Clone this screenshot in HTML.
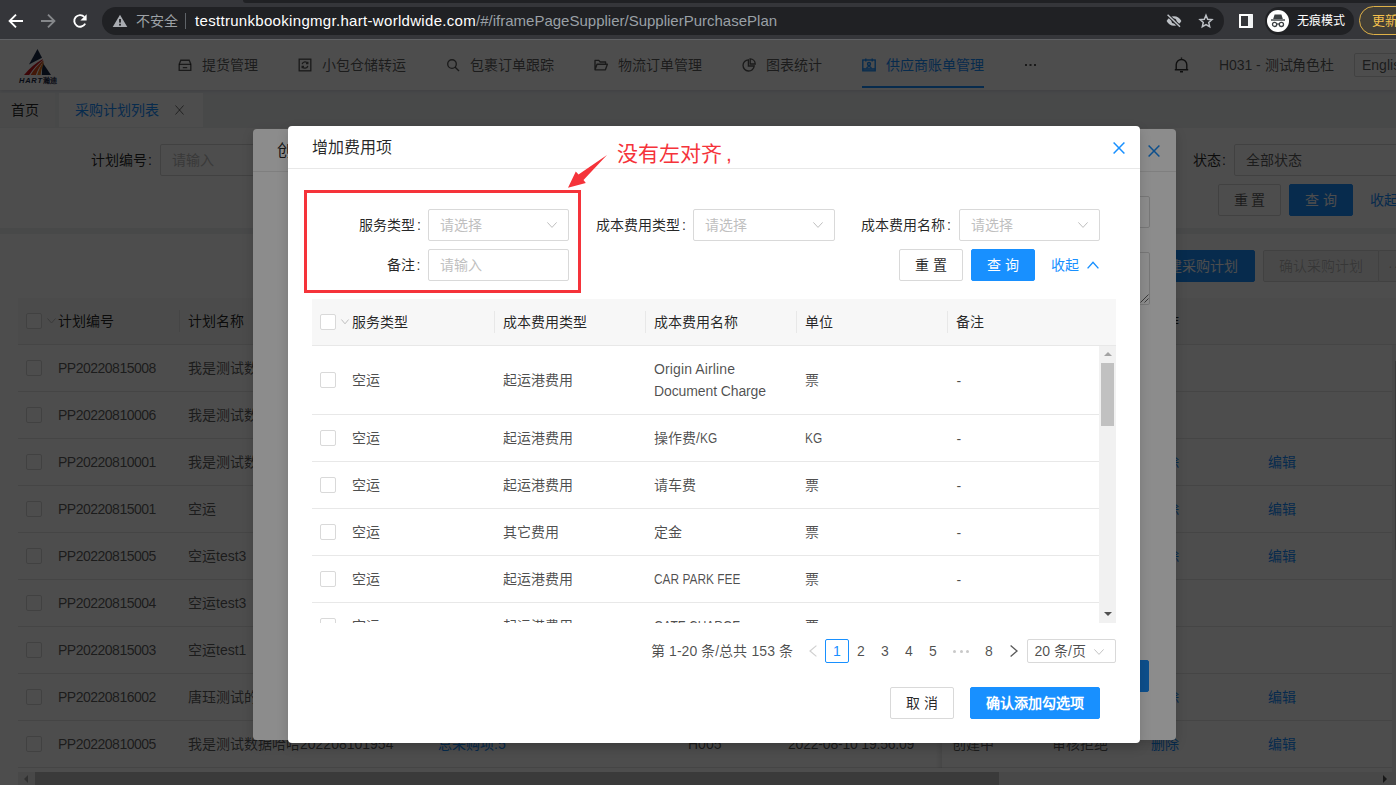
<!DOCTYPE html>
<html lang="zh-CN">
<head>
<meta charset="utf-8">
<title>SupplierPurchasePlan</title>
<style>
*{box-sizing:border-box;margin:0;padding:0}
html,body{width:1396px;height:785px;overflow:hidden;background:#f0f2f5}
body{position:relative;font-family:"Liberation Sans",sans-serif;font-size:14px;color:rgba(0,0,0,.65)}
.a{position:absolute}
.t{position:absolute;white-space:nowrap;line-height:22px;height:22px}
svg{display:block;position:absolute;overflow:visible}
/* ---------- browser chrome ---------- */
#chrome{left:0;top:0;width:1396px;height:39px;background:#35363a;z-index:50}
#chrome .strip{left:243px;top:0;width:1153px;height:2.600px;background:#202124;border-bottom-left-radius:6px}
#chrome .line{left:0;top:39px;width:1396px;height:1px;background:#606164}
#url{left:102px;top:7px;width:1122px;height:28px;border-radius:14px;background:#202124}
/* ---------- app page ---------- */
#app{left:0;top:40px;width:1396px;height:745px;background:#f0f2f5;overflow:hidden}
#hdr{left:0;top:0;width:1396px;height:50px;background:#fff;box-shadow:0 1px 4px rgba(0,21,41,.12)}
.btn{height:32px;line-height:30px;border:1px solid #d9d9d9;border-radius:2px;background:#fff;color:rgba(0,0,0,.65);text-align:center;white-space:nowrap;font-size:14px}
.btn.pri{background:#1890ff;border-color:#1890ff;color:#fff}
.cb{width:16px;height:16px;border:1px solid #d9d9d9;border-radius:2px;background:#fff}
.hl{left:18px;width:1378px;height:1px;background:#e8e8e8}
.sq{display:inline-block;transform-origin:0 50%}
.mask{left:0;top:40px;width:1396px;height:745px;background:rgba(0,0,0,.45)}
</style>
</head>
<body>
<!-- APP PAGE -->
<div id="app" class="a">
  <div id="hdr" class="a">
    <!-- logo -->
    <svg style="left:18px;top:8px" width="40" height="36" viewBox="0 0 40 36">
      <path d="M19.500 1 24 9.800 11 16.500z" fill="#1a2947"/>
      <path d="M24.500 14.500 33 27H23.800z" fill="#1a2947"/>
      <path d="M6 27C12 20 18 14.500 24.500 11.200L25 12C19.500 16 15 21 11.200 27z" fill="#c8161d"/>
      <path d="M12.600 27C16 21.500 20 16.500 25.200 12.500l.3.900C22 17.500 19.500 22 17.800 27z" fill="#e0501c"/>
      <path d="M19.200 27C20.500 22.500 22.500 18 25.600 14l.2 1.200C24 19 23 23 22.600 27z" fill="#e8781e"/>
      <text x="1" y="35" font-family="Liberation Sans" font-size="7.500" font-weight="700" font-style="italic" fill="#1a2947" textLength="23">HART</text>
      <text x="24.500" y="35" font-family="Liberation Sans" font-size="7" font-weight="700" fill="#1a2947" textLength="14">瀚迪</text>
    </svg>
    <svg style="left:178px;top:18px;color:rgba(0,0,0,.65)" width="14" height="14" viewBox="0 0 14 14"><path d="M1.200 6.200 2.800 2.200h8.400l1.600 4v6.200H1.200z" fill="none" stroke="currentColor" stroke-width="1.350"/><path d="M1.200 6.400h11.600M4.800 9.600h4.400" fill="none" stroke="currentColor" stroke-width="1.350"/></svg><div class="t" style="left:202px;top:14px;color:rgba(0,0,0,.65)">提货管理</div><svg style="left:298px;top:18px;color:rgba(0,0,0,.65)" width="14" height="14" viewBox="0 0 14 14"><rect x="1.200" y="1.200" width="11.600" height="11.600" fill="none" stroke="currentColor" stroke-width="1.350"/><path d="M4.200 6.200A2.900 2.900 0 0 1 9.600 5.400M9.800 7.800A2.900 2.900 0 0 1 4.400 8.600M9.800 3.800v1.800H8M4.200 10.200V8.400H6" fill="none" stroke="currentColor" stroke-width="1.350" stroke-width="1"/></svg><div class="t" style="left:322px;top:14px;color:rgba(0,0,0,.65)">小包仓储转运</div><svg style="left:446px;top:18px;color:rgba(0,0,0,.65)" width="14" height="14" viewBox="0 0 14 14"><circle cx="6" cy="6" r="4.300" fill="none" stroke="currentColor" stroke-width="1.350" stroke-width="1.400"/><path d="M9.200 9.200 13 13" fill="none" stroke="currentColor" stroke-width="1.350" stroke-width="1.600"/></svg><div class="t" style="left:470px;top:14px;color:rgba(0,0,0,.65)">包裹订单跟踪</div><svg style="left:594px;top:18px;color:rgba(0,0,0,.65)" width="14" height="14" viewBox="0 0 14 14"><path d="M1 11.800V2.400h3.800l1.400 1.600h5.400v2.200M1 11.800 3 6.200h10.400l-2 5.600z" fill="none" stroke="currentColor" stroke-width="1.350" stroke-linejoin="round"/></svg><div class="t" style="left:618px;top:14px;color:rgba(0,0,0,.65)">物流订单管理</div><svg style="left:742px;top:18px;color:rgba(0,0,0,.65)" width="14" height="14" viewBox="0 0 14 14"><path d="M6.400 1.800A5.600 5.600 0 1 0 12.200 8H6.400z" fill="none" stroke="currentColor" stroke-width="1.350"/><path d="M8.200.8A5.200 5.200 0 0 1 13.200 6H8.200z" fill="none" stroke="currentColor" stroke-width="1.350"/></svg><div class="t" style="left:766px;top:14px;color:rgba(0,0,0,.65)">图表统计</div><svg style="left:862px;top:18px;color:#1890ff" width="14" height="14" viewBox="0 0 14 14"><rect x=".8" y="2" width="12.400" height="10.800" fill="none" stroke="currentColor" stroke-width="1.350"/><path d="M3.800.6v3M10.200.6v3M.8 11h12.400" fill="none" stroke="currentColor" stroke-width="1.350"/><circle cx="7" cy="6" r="1.500" fill="none" stroke="currentColor" stroke-width="1.350" stroke-width="1"/><path d="M4.600 10.400A2.500 2.500 0 0 1 9.400 10.400" fill="none" stroke="currentColor" stroke-width="1.350" stroke-width="1"/></svg><div class="t" style="left:886px;top:14px;color:#1890ff">供应商账单管理</div>
    <div class="a" style="left:862px;top:46px;width:122px;height:2px;background:#1890ff"></div>
    <div class="a" style="left:1025px;top:24px;width:2px;height:2px;background:rgba(0,0,0,.65);box-shadow:4.500px 0 rgba(0,0,0,.65),9px 0 rgba(0,0,0,.65)"></div>
    <!-- bell -->
    <svg style="left:1174px;top:17px;color:rgba(0,0,0,.8)" width="15" height="17" viewBox="0 0 15 17"><path d="M2.200 12.500V7.800a5.300 5.300 0 0 1 10.600 0v4.700M.8 12.800h13.400" fill="none" stroke="currentColor" stroke-width="1.400"/><path d="M7.500 1.800V.6M6 14.800h3" fill="none" stroke="currentColor" stroke-width="1.400"/></svg>
    <div class="t" style="left:1219px;top:14px;color:rgba(0,0,0,.65);letter-spacing:-.05px">H031 - 测试角色杜</div>
    <div class="a" style="left:1354px;top:13px;width:80px;height:24px;border:1px solid #d9d9d9;border-radius:2px"></div>
    <div class="t" style="left:1362px;top:14px;color:rgba(0,0,0,.65)">English</div>
  </div>
  <div class="a" style="left:0;top:53px;width:55px;height:34px;background:#f7f7f7"></div>
  <div class="a" style="left:59px;top:53px;width:144px;height:34px;background:#fff"></div>
  <div class="t" style="left:11px;top:59px;color:rgba(0,0,0,.85)">首页</div>
  <div class="t" style="left:75px;top:59px;color:#1890ff">采购计划列表</div>
  <svg style="left:175px;top:65px" width="9" height="10" viewBox="0 0 9 10"><path d="M.5.500l8 9M8.500.500l-8 9" stroke="rgba(0,0,0,.55)" stroke-width="1" fill="none"/></svg>
  <div class="a" style="left:0;top:88px;width:1396px;height:100px;background:#fff"></div>
  <div class="t" style="left:91px;top:109px;color:rgba(0,0,0,.85)">计划编号<span style="margin-left:1px">:</span></div>
  <div class="a" style="left:160px;top:104px;width:240px;height:32px;border:1px solid #d9d9d9;border-radius:2px"></div>
  <div class="t" style="left:172px;top:109px;color:#bfbfbf">请输入</div>
  <div class="t" style="left:1193px;top:109px;color:rgba(0,0,0,.85)">状态<span style="margin-left:1px">:</span></div>
  <div class="a" style="left:1234px;top:104px;width:240px;height:32px;border:1px solid #d9d9d9;border-radius:2px"></div>
  <div class="t" style="left:1246px;top:109px;color:rgba(0,0,0,.65)">全部状态</div>
  <div class="a btn" style="left:1218px;top:144px;width:63px">重 置</div>
  <div class="a btn pri" style="left:1289px;top:144px;width:64px">查 询</div>
  <div class="t" style="left:1370px;top:149px;color:#1890ff">收起</div>
  <div class="a" style="left:0;top:194px;width:1396px;height:560px;background:#fff"></div>
  <div class="a btn pri" style="left:1139px;top:210px;width:116px;text-align:right;padding-right:16px">新建采购计划</div>
  <div class="a btn" style="left:1263px;top:210px;width:116px;background:#f5f5f5;color:rgba(0,0,0,.25);border-radius:2px 0 0 2px">确认采购计划</div>
  <div class="a btn" style="left:1378px;top:210px;width:40px;background:#f5f5f5;color:rgba(0,0,0,.25);text-align:left;padding-left:9px;letter-spacing:1px">···</div>
  <div class="a" style="left:18px;top:258px;width:1378px;height:46px;background:#fafafa"></div>
  <div class="a hl" style="top:304px"></div>
  <div class="a cb" style="left:26px;top:273px"></div>
  <svg style="left:47px;top:278px" width="9" height="6" viewBox="0 0 9 6"><path d="M.5.500l4 4.500 4-4.500" stroke="#bfbfbf" stroke-width="1" fill="none"/></svg>
  <div class="t" style="left:58px;top:270px;color:rgba(0,0,0,.85)">计划编号</div>
  <div class="a" style="left:179px;top:270px;width:1px;height:22px;background:#e8e8e8"></div>
  <div class="t" style="left:188px;top:270px;color:rgba(0,0,0,.85)">计划名称</div>
  <div class="t" style="left:1151px;top:270px;color:rgba(0,0,0,.85)">操作</div>
  <div class="a hl" style="top:351px"></div>
  <div class="a cb" style="left:26px;top:320px"></div>
  <div class="t" style="left:58px;top:317px;letter-spacing:-.5px">PP20220815008</div>
  <div class="t" style="left:188px;top:317px">我是测试数据哈哈</div>
  <div class="a hl" style="top:398px"></div>
  <div class="a cb" style="left:26px;top:367px"></div>
  <div class="t" style="left:58px;top:364px;letter-spacing:-.5px">PP20220810006</div>
  <div class="t" style="left:188px;top:364px">我是测试数据哈哈</div>
  <div class="a hl" style="top:445px"></div>
  <div class="a cb" style="left:26px;top:414px"></div>
  <div class="t" style="left:58px;top:411px;letter-spacing:-.5px">PP20220810001</div>
  <div class="t" style="left:188px;top:411px">我是测试数据哈哈</div>
  <div class="t" style="left:1151px;top:411px;color:#1890ff">删除</div>
  <div class="t" style="left:1268px;top:411px;color:#1890ff">编辑</div>
  <div class="a hl" style="top:492px"></div>
  <div class="a cb" style="left:26px;top:461px"></div>
  <div class="t" style="left:58px;top:458px;letter-spacing:-.5px">PP20220815001</div>
  <div class="t" style="left:188px;top:458px">空运</div>
  <div class="t" style="left:1151px;top:458px;color:#1890ff">删除</div>
  <div class="t" style="left:1268px;top:458px;color:#1890ff">编辑</div>
  <div class="a hl" style="top:539px"></div>
  <div class="a cb" style="left:26px;top:508px"></div>
  <div class="t" style="left:58px;top:505px;letter-spacing:-.5px">PP20220815005</div>
  <div class="t" style="left:188px;top:505px">空运test3</div>
  <div class="t" style="left:1151px;top:505px;color:#1890ff">删除</div>
  <div class="t" style="left:1268px;top:505px;color:#1890ff">编辑</div>
  <div class="a hl" style="top:586px"></div>
  <div class="a cb" style="left:26px;top:555px"></div>
  <div class="t" style="left:58px;top:552px;letter-spacing:-.5px">PP20220815004</div>
  <div class="t" style="left:188px;top:552px">空运test3</div>
  <div class="a hl" style="top:633px"></div>
  <div class="a cb" style="left:26px;top:602px"></div>
  <div class="t" style="left:58px;top:599px;letter-spacing:-.5px">PP20220815003</div>
  <div class="t" style="left:188px;top:599px">空运test1</div>
  <div class="a hl" style="top:680px"></div>
  <div class="a cb" style="left:26px;top:649px"></div>
  <div class="t" style="left:58px;top:646px;letter-spacing:-.5px">PP20220816002</div>
  <div class="t" style="left:188px;top:646px">唐珏测试的</div>
  <div class="t" style="left:1151px;top:646px;color:#1890ff">删除</div>
  <div class="t" style="left:1268px;top:646px;color:#1890ff">编辑</div>
  <div class="a hl" style="top:727px"></div>
  <div class="a cb" style="left:26px;top:696px"></div>
  <div class="t" style="left:58px;top:693px;letter-spacing:-.5px">PP20220810005</div>
  <div class="t" style="left:188px;top:693px">我是测试数据哈哈202208101954</div>
  <div class="t" style="left:1151px;top:693px;color:#1890ff">删除</div>
  <div class="t" style="left:1268px;top:693px;color:#1890ff">编辑</div>
  <div class="t" style="left:438px;top:693px;color:#1890ff">总采购项:5</div>
  <div class="t" style="left:688px;top:693px">H005</div>
  <div class="t" style="left:788px;top:693px;letter-spacing:-.2px">2022-08-10 19:56:09</div>
  <div class="a" style="left:936px;top:681px;width:6px;height:47px;background:linear-gradient(90deg,rgba(0,0,0,0),rgba(0,0,0,.08))"></div>
  <div class="t" style="left:952px;top:693px">创建中</div>
  <div class="t" style="left:1052px;top:693px">审核拒绝</div>
  <div class="a" style="left:18px;top:732px;width:1378px;height:13px;background:#f1f1f1"></div>
  <div class="a" style="left:35px;top:732px;width:964px;height:13px;background:#c1c1c1"></div>
  <svg style="left:24px;top:735px" width="4" height="8" viewBox="0 0 4 8"><path d="M4 0v8L0 4z" fill="#a3a3a3"/></svg>
  <svg style="left:1383px;top:735px" width="4" height="8" viewBox="0 0 4 8"><path d="M0 0v8l4-4z" fill="#505050"/></svg>
  <div class="a" style="left:1392px;top:305px;width:4px;height:427px;background:#f5f5f5"></div>
  <div class="a" style="left:1394.500px;top:321px;width:1.500px;height:189px;background:#c1c1c1"></div>
</div>
<div class="a mask" style="z-index:10"></div>
<!-- OUTER MODAL -->
<div id="m1" class="a" style="z-index:11;left:253px;top:129px;width:923px;height:611px;background:#fff;border-radius:4px;overflow:hidden;box-shadow:0 4px 12px rgba(0,0,0,.15)">
  <div class="t" style="left:24px;top:11px;font-size:16px;color:rgba(0,0,0,.85)">创建采购计划</div>
  <div class="a" style="left:0;top:42px;width:923px;height:1px;background:#e8e8e8"></div>
  <svg style="left:895px;top:16px" width="12" height="12" viewBox="0 0 12 12"><path d="M.6.400 11.400 11.600M11.400.400.6 11.600" stroke="#1890ff" stroke-width="1.500" fill="none"/></svg>
  <div class="a" style="left:447px;top:67px;width:450px;height:32px;border:1px solid #d9d9d9;border-radius:2px"></div>
  <div class="a" style="left:447px;top:123px;width:450px;height:53px;border:1px solid #d9d9d9;border-radius:2px"></div>
  <svg style="left:887px;top:165px" width="9" height="9" viewBox="0 0 9 9"><path d="M8.500.500l-8 8M8.500 4.500l-4 4" stroke="#6b6b6b" stroke-width="1" fill="none"/></svg>
  <div class="a btn pri" style="left:796px;top:531px;width:100px"></div>
</div>
<div class="a mask" style="z-index:20"></div>
<!-- INNER MODAL -->
<div id="m2" class="a" style="color:rgba(0,0,0,.7);z-index:21;left:288px;top:126px;width:852px;height:617px;background:#fff;border-radius:4px;box-shadow:0 4px 12px rgba(0,0,0,.15)">
  <div class="t" style="left:24px;top:11px;font-size:16px;color:rgba(0,0,0,.85)">增加费用项</div>
  <div class="a" style="left:0;top:42px;width:852px;height:1px;background:#e8e8e8"></div>
  <svg style="left:825px;top:16px" width="12" height="12" viewBox="0 0 12 12"><path d="M.6.400 11.400 11.600M11.400.400.6 11.600" stroke="#1890ff" stroke-width="1.500" fill="none"/></svg>
  <div class="t" style="left:329px;top:13px;font-size:21px;line-height:30px;height:30px;color:#f5333a">没有左对齐<span style="margin-left:4px">,</span></div>
  <svg style="left:272px;top:24px" width="52" height="42" viewBox="560 150 52 42"><path d="M607 155 578.500 174.500 575.800 171.500 568 187.700 585.800 183 583.500 180z" fill="#f5333a"/></svg>
  <div class="a" style="left:16px;top:64px;width:277px;height:103px;border:3px solid #f5333a"></div>
  <div class="t" style="left:71px;top:88px;color:rgba(0,0,0,.85)">服务类型<span style="margin-left:2px">:</span></div>
  <div class="a" style="left:140px;top:83px;width:141px;height:32px;border:1px solid #d9d9d9;border-radius:2px"></div><div class="t" style="left:152px;top:88px;color:#bfbfbf">请选择</div>
  <svg style="left:259px;top:96px" width="10" height="6" viewBox="0 0 10 6"><path d="M.4.400 5 5.400 9.600.400" stroke="#bfbfbf" stroke-width="1" fill="none"/></svg>
  <div class="t" style="left:308px;top:88px;color:rgba(0,0,0,.85)">成本费用类型<span style="margin-left:2px">:</span></div>
  <div class="a" style="left:405px;top:83px;width:142px;height:32px;border:1px solid #d9d9d9;border-radius:2px"></div><div class="t" style="left:417px;top:88px;color:#bfbfbf">请选择</div>
  <svg style="left:525px;top:96px" width="10" height="6" viewBox="0 0 10 6"><path d="M.4.400 5 5.400 9.600.400" stroke="#bfbfbf" stroke-width="1" fill="none"/></svg>
  <div class="t" style="left:573px;top:88px;color:rgba(0,0,0,.85)">成本费用名称<span style="margin-left:2px">:</span></div>
  <div class="a" style="left:671px;top:83px;width:141px;height:32px;border:1px solid #d9d9d9;border-radius:2px"></div><div class="t" style="left:683px;top:88px;color:#bfbfbf">请选择</div>
  <svg style="left:790px;top:96px" width="10" height="6" viewBox="0 0 10 6"><path d="M.4.400 5 5.400 9.600.400" stroke="#bfbfbf" stroke-width="1" fill="none"/></svg>
  <div class="t" style="left:98.5px;top:128px;color:rgba(0,0,0,.85)">备注<span style="margin-left:2px">:</span></div>
  <div class="a" style="left:140px;top:123px;width:141px;height:32px;border:1px solid #d9d9d9;border-radius:2px"></div><div class="t" style="left:152px;top:128px;color:#bfbfbf">请输入</div>
  <div class="a btn" style="left:611px;top:123px;width:64px;color:rgba(0,0,0,.85)">重 置</div>
  <div class="a btn pri" style="left:683px;top:123px;width:64px">查 询</div>
  <div class="t" style="left:763px;top:128px;color:#1890ff">收起</div>
  <svg style="left:799px;top:135px" width="12" height="8" viewBox="0 0 12 8"><path d="M.6 7.400 6 1.200 11.400 7.400" stroke="#1890ff" stroke-width="1.400" fill="none"/></svg>
  <div class="a" style="left:24px;top:173px;width:804px;height:46px;background:#f7f7f7"></div>
  <div class="a" style="left:24px;top:219px;width:804px;height:1px;background:#e8e8e8"></div>
  <div class="a cb" style="left:32px;top:188px"></div>
  <svg style="left:53px;top:193px" width="8" height="6" viewBox="0 0 8 6"><path d="M.4.500 4 4.800 7.600.500" stroke="#bfbfbf" stroke-width="1" fill="none"/></svg>
  <div class="t" style="left:64px;top:185px;color:rgba(0,0,0,.85)">服务类型</div>
  <div class="t" style="left:215px;top:185px;color:rgba(0,0,0,.85)">成本费用类型</div>
  <div class="t" style="left:366px;top:185px;color:rgba(0,0,0,.85)">成本费用名称</div>
  <div class="t" style="left:517px;top:185px;color:rgba(0,0,0,.85)">单位</div>
  <div class="t" style="left:668px;top:185px;color:rgba(0,0,0,.85)">备注</div>
  <div class="a" style="left:206px;top:185px;width:1px;height:22px;background:#e8e8e8"></div>
  <div class="a" style="left:357px;top:185px;width:1px;height:22px;background:#e8e8e8"></div>
  <div class="a" style="left:508px;top:185px;width:1px;height:22px;background:#e8e8e8"></div>
  <div class="a" style="left:659px;top:185px;width:1px;height:22px;background:#e8e8e8"></div>
  <div class="a" style="left:24px;top:220px;width:804px;height:276.500px;overflow:hidden"><div class="a" style="left:0;top:68px;width:787px;height:1px;background:#e8e8e8"></div>
    <div class="a cb" style="left:8px;top:26.0px"></div>
    <div class="t" style="left:40px;top:23.0px">空运</div>
    <div class="t" style="left:191px;top:23.0px">起运港费用</div>
    <div class="t" style="left:342px;top:12.0px;letter-spacing:.12px">Origin Airline</div>
    <div class="t" style="left:342px;top:34.0px;letter-spacing:-.11px">Document Charge</div>
    <div class="t" style="left:493px;top:23.0px">票</div>
    <div class="t" style="left:644.5px;top:24.0px">-</div>
    <div class="a" style="left:0;top:115px;width:787px;height:1px;background:#e8e8e8"></div>
    <div class="a cb" style="left:8px;top:84.0px"></div>
    <div class="t" style="left:40px;top:81.0px">空运</div>
    <div class="t" style="left:191px;top:81.0px">起运港费用</div>
    <div class="t" style="left:342px;top:81.0px">操作费/<span class="sq" style="transform:scaleX(.85)">KG</span></div>
    <div class="t" style="left:493px;top:81.0px"><span class="sq" style="transform:scaleX(.85)">KG</span></div>
    <div class="t" style="left:644.5px;top:82.0px">-</div>
    <div class="a" style="left:0;top:162px;width:787px;height:1px;background:#e8e8e8"></div>
    <div class="a cb" style="left:8px;top:131.0px"></div>
    <div class="t" style="left:40px;top:128.0px">空运</div>
    <div class="t" style="left:191px;top:128.0px">起运港费用</div>
    <div class="t" style="left:342px;top:128.0px">请车费</div>
    <div class="t" style="left:493px;top:128.0px">票</div>
    <div class="t" style="left:644.5px;top:129.0px">-</div>
    <div class="a" style="left:0;top:209px;width:787px;height:1px;background:#e8e8e8"></div>
    <div class="a cb" style="left:8px;top:178.0px"></div>
    <div class="t" style="left:40px;top:175.0px">空运</div>
    <div class="t" style="left:191px;top:175.0px">其它费用</div>
    <div class="t" style="left:342px;top:175.0px">定金</div>
    <div class="t" style="left:493px;top:175.0px">票</div>
    <div class="t" style="left:644.5px;top:176.0px">-</div>
    <div class="a" style="left:0;top:256px;width:787px;height:1px;background:#e8e8e8"></div>
    <div class="a cb" style="left:8px;top:225.0px"></div>
    <div class="t" style="left:40px;top:222.0px">空运</div>
    <div class="t" style="left:191px;top:222.0px">起运港费用</div>
    <div class="t" style="left:342px;top:222.0px"><span class="sq" style="transform:scaleX(.85)">CAR PARK FEE</span></div>
    <div class="t" style="left:493px;top:222.0px">票</div>
    <div class="t" style="left:644.5px;top:223.0px">-</div>
    <div class="a" style="left:0;top:303px;width:787px;height:1px;background:#e8e8e8"></div>
    <div class="a cb" style="left:8px;top:272.0px"></div>
    <div class="t" style="left:40px;top:269.0px">空运</div>
    <div class="t" style="left:191px;top:269.0px">起运港费用</div>
    <div class="t" style="left:342px;top:269.0px"><span class="sq" style="transform:scaleX(.855)">GATE CHARGE</span></div>
    <div class="t" style="left:493px;top:269.0px">票</div>
    <div class="t" style="left:644.5px;top:270.0px">-</div>
    <div class="a" style="left:787px;top:0;width:17px;height:277px;background:#f1f1f1"></div>
    <div class="a" style="left:789px;top:17px;width:13px;height:63px;background:#c1c1c1"></div>
    <svg style="left:792px;top:6px" width="8" height="4" viewBox="0 0 8 4"><path d="M0 4h8L4 0z" fill="#a3a3a3"/></svg>
    <svg style="left:792px;top:266px" width="8" height="4" viewBox="0 0 8 4"><path d="M0 0h8L4 4z" fill="#505050"/></svg></div>
  <div class="t" style="left:363px;top:514px;letter-spacing:.07px">第 1-20 条/总共 153 条</div>
  <svg style="left:521px;top:519px" width="8" height="12" viewBox="0 0 8 12"><path d="M7.400.600 1 6 7.400 11.400" stroke="#d0d0d0" stroke-width="1.200" fill="none"/></svg>
  <div class="a" style="left:537px;top:513px;width:24px;height:24px;border:1px solid #1890ff;border-radius:2px"></div>
  <div class="t" style="left:537px;top:514px;width:24px;text-align:center;color:#1890ff">1</div>
  <div class="t" style="left:561px;top:514px;width:24px;text-align:center">2</div>
  <div class="t" style="left:585px;top:514px;width:24px;text-align:center">3</div>
  <div class="t" style="left:609px;top:514px;width:24px;text-align:center">4</div>
  <div class="t" style="left:633px;top:514px;width:24px;text-align:center">5</div>
  <div class="t" style="left:689px;top:514px;width:24px;text-align:center">8</div>
  <div class="a" style="left:665.0px;top:523.500px;width:3px;height:3px;border-radius:1.500px;background:#c9c9c9"></div>
  <div class="a" style="left:671.5px;top:523.500px;width:3px;height:3px;border-radius:1.500px;background:#c9c9c9"></div>
  <div class="a" style="left:678.0px;top:523.500px;width:3px;height:3px;border-radius:1.500px;background:#c9c9c9"></div>
  <svg style="left:721.5px;top:519px" width="8" height="12" viewBox="0 0 8 12"><path d="M.600.600 7 6 .600 11.400" stroke="#595959" stroke-width="1.300" fill="none"/></svg>
  <div class="a" style="left:739px;top:513px;width:89px;height:24px;border:1px solid #d9d9d9;border-radius:2px"></div>
  <div class="t" style="left:746.5px;top:514px">20 条/页</div>
  <svg style="left:806px;top:523px" width="10" height="6" viewBox="0 0 10 6"><path d="M.4.400 5 5.400 9.600.400" stroke="#c4c4c4" stroke-width="1" fill="none"/></svg>
  <div class="a btn" style="left:602px;top:561px;width:64px;color:rgba(0,0,0,.85)">取 消</div>
  <div class="a btn pri" style="left:682px;top:561px;width:130px;font-weight:700">确认添加勾选项</div>
</div>
<!-- BROWSER CHROME -->
<div id="chrome" class="a">
  <div class="a strip"></div>
  <div class="a line"></div>
  <!-- back -->
  <svg style="left:8px;top:13px" width="16" height="16" viewBox="0 0 16 16"><path d="M15 8H2.2M8 1.6 1.6 8 8 14.4" fill="none" stroke="#fff" stroke-width="1.9"/></svg>
  <!-- forward -->
  <svg style="left:40px;top:13px" width="16" height="16" viewBox="0 0 16 16"><path d="M1 8h12.8M8 1.6 14.4 8 8 14.4" fill="none" stroke="#85878a" stroke-width="1.9"/></svg>
  <!-- reload -->
  <svg style="left:72px;top:13px" width="16" height="16" viewBox="0 0 16 16"><path d="M13.2 10.6A5.8 5.8 0 1 1 12.3 3.9" fill="none" stroke="#fff" stroke-width="1.9"/><path d="M14.6 1.2v6.2H8.4z" fill="#fff"/></svg>
  <div id="url" class="a">
    <svg style="left:10px;top:7px" width="16" height="14" viewBox="0 0 16 14"><path d="M8 .8 15.3 13H.7z" fill="#a9acb1"/><rect x="7.1" y="5" width="1.8" height="3.6" fill="#202124"/><rect x="7.1" y="9.8" width="1.8" height="1.8" fill="#202124"/></svg>
    <div class="t" style="left:34px;top:3px;color:#9da1a6;font-size:14px">不安全</div>
    <div class="a" style="left:83px;top:6px;width:1px;height:16px;background:#5f6368"></div>
    <div class="t" style="left:93px;top:3px;font-size:15px;color:#fff;letter-spacing:.31px">testtrunkbookingmgr.hart-worldwide.com<span style="color:#9aa0a6;letter-spacing:0">/#/iframePageSupplier/SupplierPurchasePlan</span></div>
    <!-- eye slash -->
    <svg style="left:1064px;top:6px" width="16" height="16" viewBox="0 0 16 16"><path d="M.6 8C2.2 4.9 4.9 3.2 8 3.2S13.8 4.9 15.4 8C13.8 11.100 11.100 12.800 8 12.800S2.200 11.100.6 8z" fill="#bdc1c6"/><circle cx="8" cy="8" r="2.500" fill="#202124"/><path d="M1.200 1.400 14.400 14.200" stroke="#202124" stroke-width="3.400"/><path d="M1.600 1.800 14 13.800" stroke="#bdc1c6" stroke-width="1.500"/></svg>
    <!-- star -->
    <svg style="left:1097px;top:7px" width="14" height="14" viewBox="0 0 16 16"><path d="M8 1.500 9.900 6.100 14.800 6.500 11.100 9.700 12.200 14.500 8 12 3.800 14.500 4.900 9.700 1.200 6.500 6.100 6.100z" fill="none" stroke="#bdc1c6" stroke-width="1.700" stroke-linejoin="miter"/></svg>
  </div>
  <!-- side panel -->
  <div class="a" style="left:1239px;top:14px;width:14px;height:14px;border:2px solid #fff;border-right:5px solid #f1f3f4;border-radius:1px"></div>
  <!-- incognito chip -->
  <div class="a" style="left:1265px;top:7px;width:89px;height:28px;border-radius:14px;background:#202124"></div>
  <div class="a" style="left:1267px;top:10px;width:22px;height:22px;border-radius:11px;background:#fff"></div>
  <svg style="left:1270px;top:13px" width="16" height="16" viewBox="0 0 16 16"><path d="M4.600 1.600h6.800L12.800 6H3.200z" fill="#3c4043"/><rect x="1" y="6.300" width="14" height="1.400" fill="#3c4043"/><circle cx="4.600" cy="11.400" r="2.100" fill="none" stroke="#3c4043" stroke-width="1.300"/><circle cx="11.400" cy="11.400" r="2.100" fill="none" stroke="#3c4043" stroke-width="1.300"/><path d="M6.700 11h2.600" stroke="#3c4043" stroke-width="1.200"/></svg>
  <div class="t" style="left:1297px;top:10px;font-size:12px;color:#fff">无痕模式</div>
  <!-- update chip -->
  <div class="a" style="left:1359px;top:6px;width:60px;height:29px;border-radius:15px;border:1px solid #dfb147;background:#423f37"></div>
  <div class="t" style="left:1372px;top:10px;font-size:13px;color:#f4c04d">更新</div>
</div>
</body>
</html>
